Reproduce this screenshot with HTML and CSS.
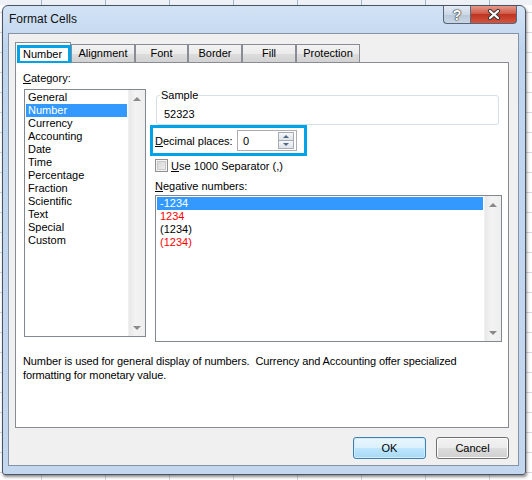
FILE: index.html
```html
<!DOCTYPE html>
<html lang="en">
<head>
  <meta charset="UTF-8" />
  <title>Format Cells</title>
  <link rel="stylesheet" href="styles.css">
</head>
<body>
  <!-- sheet header strip peeking above the dialog -->
  <div class="col-heads"></div>

  <div class="window">
    <div class="titlebar">
      <span class="title">Format Cells</span>
      <div class="caption-btns">
        <span class="cap help">?</span>
        <span class="cap close">
          <svg width="14" height="11" viewBox="0 0 14 11">
            <path d="M3 2 L11 9 M11 2 L3 9" stroke="#3a3a3a" stroke-width="4.2" stroke-linecap="round" fill="none"/>
            <path d="M3 2 L11 9 M11 2 L3 9" stroke="#fff" stroke-width="2.2" stroke-linecap="round" fill="none"/>
          </svg>
        </span>
      </div>
    </div>

    <div class="client">
      <div class="tabs">
        <div class="tab selected"><span class="mark">Number</span></div>
        <div class="tab w-align">Alignment</div>
        <div class="tab w-font">Font</div>
        <div class="tab w-border">Border</div>
        <div class="tab w-fill">Fill</div>
        <div class="tab w-prot">Protection</div>
      </div>

      <div class="panel">
        <div class="panel-top">
          <div class="category">
            <div class="caption"><u>C</u>ategory:</div>
            <div class="listbox cat-list">
              <div class="items">
                <div class="item">General</div>
                <div class="item selected">Number</div>
                <div class="item">Currency</div>
                <div class="item">Accounting</div>
                <div class="item">Date</div>
                <div class="item">Time</div>
                <div class="item">Percentage</div>
                <div class="item">Fraction</div>
                <div class="item">Scientific</div>
                <div class="item">Text</div>
                <div class="item">Special</div>
                <div class="item">Custom</div>
              </div>
              <div class="vscroll">
                <span class="arrow up"></span>
                <span class="arrow down"></span>
              </div>
            </div>
          </div>

          <div class="options">
            <fieldset class="sample">
              <legend>Sample</legend>
              <div class="sample-value">52323</div>
            </fieldset>

            <div class="decimal-row">
              <span class="dec-label"><u>D</u>ecimal places:</span>
              <div class="spinbox">
                <span>0</span>
                <div class="spin">
                  <span class="spin-btn"><span class="tri up"></span></span>
                  <span class="spin-btn"><span class="tri down"></span></span>
                </div>
              </div>
            </div>

            <div class="check-row">
              <span class="checkbox"></span>
              <span><u>U</u>se 1000 Separator (,)</span>
            </div>

            <div class="caption neg-caption"><u>N</u>egative numbers:</div>
            <div class="listbox neg-list">
              <div class="items">
                <div class="item selected">-1234</div>
                <div class="item red">1234</div>
                <div class="item">(1234)</div>
                <div class="item red">(1234)</div>
              </div>
              <div class="vscroll">
                <span class="arrow up"></span>
                <span class="arrow down"></span>
              </div>
            </div>
          </div>
        </div>

        <p class="desc">Number is used for general display of numbers.&nbsp; Currency and Accounting offer specialized<br>formatting for monetary value.</p>
      </div>

      <div class="buttons">
        <button class="btn default">OK</button>
        <button class="btn">Cancel</button>
      </div>
    </div>
  </div>
</body>
</html>
```

FILE: styles.css
```css
:root {
  --ui-font: "Liberation Sans", Arial, sans-serif;
  --frame: #bfd5ee;
  --panel-border: #898c95;
  --select: #3399ff;
  --mark: #00a2e8;
}

* {
  box-sizing: border-box;
}

html, body {
  margin: 0;
  height: 100%;
}

/* spreadsheet behind the dialog */
body {
  font-family: var(--ui-font);
  font-size: 11px;
  color: #000;
  background-color: #fff;
  background-image:
    linear-gradient(90deg, #d4d8de 1px, transparent 1px),
    linear-gradient(#d4d8de 1px, transparent 1px);
  background-size: 64px 20px;
  background-position: 41px 0, 0 12px;
  overflow: hidden;
}

.col-heads {
  height: 5px;
  background-color: #eef1f5;
  background-image: linear-gradient(90deg, #9eb6ce 1px, transparent 1px);
  background-size: 64px 5px;
  background-position: 41px 0;
}

/* Window frame */

.window {
  width: 524px;
  height: 470px;
  margin-left: 2px;
  border: 1px solid #4a5462;
  border-radius: 6px 6px 3px 3px;
  background: linear-gradient(#d3e3f5, var(--frame) 40px, #c3d8ef);
  padding: 0 6px 8px 5px;
  box-shadow: 1px 2px 3px rgba(0, 0, 0, 0.45);
  display: flex;
  flex-direction: column;
}

.titlebar {
  height: 27px;
  display: flex;
  justify-content: space-between;
  align-items: flex-start;
  flex-shrink: 0;
}

.title {
  font-size: 12px;
  line-height: 15px;
  padding-top: 6px;
  padding-left: 1px;
  color: #111;
}

.caption-btns {
  display: flex;
  margin-right: 2px;
}

.cap {
  height: 18px;
  display: flex;
  align-items: center;
  justify-content: center;
  border: 1px solid #56657a;
  border-top: none;
}

.cap.help {
  width: 27px;
  border-radius: 0 0 0 4px;
  border-right: none;
  background: linear-gradient(#e4ecf5, #cbd8e6 50%, #b9c9da 51%, #c9d6e4);
  font: bold 14px var(--ui-font);
  color: #fff;
  text-shadow: 0 0 1px #333, 0 0 1px #333, 0 0 2px #333;
}

.cap.close {
  width: 47px;
  border-radius: 0 0 4px 0;
  background: linear-gradient(#e6998a, #cf5a48 45%, #bf3420 50%, #d4553e);
}

/* Client area */

.client {
  flex: 1;
  background: #f0f0f0;
  border: 1px solid #8593a4;
  padding: 8px 9px 0 6px;
}

.tabs {
  display: flex;
  align-items: flex-end;
  height: 21px;
  margin-bottom: -1px;
  position: relative;
  z-index: 1;
}

.tab {
  height: 18px;
  margin-bottom: 1px;
  border: 1px solid var(--panel-border);
  border-bottom: none;
  background: linear-gradient(#f3f3f3, #ebebeb 50%, #dddddd 51%, #d2d2d2);
  text-align: center;
  line-height: 17px;
}

.tab.selected {
  width: 56px;
  height: 21px;
  margin-bottom: 0;
  background: #fff;
  padding: 2px 0 0 1px;
}

.tab .mark {
  display: block;
  width: 54px;
  height: 18px;
  border: 3px solid var(--mark);
  border-bottom-width: 2px;
  text-align: left;
  padding-left: 3px;
  line-height: 12px;
}

.w-align { width: 64px; }
.w-font { width: 53px; }
.w-border { width: 54px; }
.w-fill { width: 54px; }
.w-prot { width: 64px; }

.panel {
  width: 494px;
  height: 366px;
  background: #fff;
  border: 1px solid var(--panel-border);
  padding: 9px 0 0 8px;
}

.panel-top {
  display: flex;
  align-items: flex-start;
}

.caption {
  line-height: 13px;
  margin-left: -1px;
}

.category {
  width: 122px;
}

/* List boxes */

.listbox {
  display: flex;
  border: 1px solid #828790;
  background: #fff;
}

.cat-list {
  margin-top: 4px;
  height: 248px;
}

.items {
  flex: 1;
  padding: 1px;
}

.item {
  line-height: 13px;
  height: 13px;
  padding-left: 2px;
  white-space: nowrap;
}

.neg-list .item {
  padding-left: 3px;
}

.item.selected {
  background: var(--select);
  color: #fff;
}

.item.red {
  color: #ff0000;
}

.vscroll {
  width: 17px;
  display: flex;
  flex-direction: column;
  justify-content: space-between;
  align-items: center;
  padding: 7px 0 6px;
  background: linear-gradient(90deg, #e8e8e8, #f3f3f3 40%, #eeeeee);
  border-left: 1px solid #f0f0f0;
}

.arrow {
  width: 0;
  height: 0;
  border-left: 4px solid transparent;
  border-right: 4px solid transparent;
}

.arrow.up {
  border-bottom: 4px solid #8a8a8a;
}

.arrow.down {
  border-top: 4px solid #8a8a8a;
}

/* Right side options */

.options {
  width: 347px;
  margin-left: 9px;
  margin-top: 17px;
}

.sample {
  margin: 0 0 0 1px;
  width: 343px;
  padding: 6px 0 3px 7px;
  border: 1px solid #d5dfe5;
  border-radius: 3px;
}

.sample legend {
  line-height: 13px;
  padding: 0 1px;
  margin-left: -4px;
}

.sample-value {
  line-height: 13px;
}

.decimal-row {
  display: flex;
  align-items: center;
  width: 157px;
  height: 31px;
  margin-left: -5px;
  border: 3px solid var(--mark);
  padding-left: 2px;
}

.dec-label {
  width: 82px;
}

.spinbox {
  width: 60px;
  height: 21px;
  display: flex;
  align-items: center;
  justify-content: space-between;
  border: 1px solid #abadb3;
  background: #fff;
  padding: 0 2px 0 5px;
}

.spin {
  display: flex;
  flex-direction: column;
}

.spin-btn {
  width: 16px;
  height: 9px;
  display: flex;
  align-items: center;
  justify-content: center;
  border: 1px solid #a5acb5;
  background: linear-gradient(#f6f7f9, #dfe3e8);
}

.spin-btn + .spin-btn {
  margin-top: -1px;
}

.tri {
  width: 0;
  height: 0;
  border-left: 3px solid transparent;
  border-right: 3px solid transparent;
}

.tri.up {
  border-bottom: 3px solid #4f6788;
}

.tri.down {
  border-top: 3px solid #4f6788;
}

.check-row {
  display: flex;
  align-items: center;
  height: 13px;
  margin-top: 3px;
  gap: 3px;
}

.checkbox {
  width: 13px;
  height: 13px;
  border: 1px solid #8f8f8f;
  background: linear-gradient(135deg, #d2d2d2, #f2f2f2);
  box-shadow: inset 0 0 0 1px #f4f4f4, inset 0 0 0 2px #c9c9c9;
}

.neg-caption {
  margin-top: 8px;
  margin-left: 0;
}

.neg-list {
  margin-top: 2px;
  height: 147px;
}

.desc {
  margin: 12px 0 0 -1px;
  line-height: 14px;
  letter-spacing: -0.1px;
}

/* Dialog buttons */

.buttons {
  display: flex;
  justify-content: flex-end;
  gap: 10px;
  margin-top: 9px;
}

.btn {
  width: 73px;
  height: 22px;
  font: 11px var(--ui-font);
  color: #000;
  border: 1px solid #707070;
  border-radius: 3px;
  background: linear-gradient(#f2f2f2, #ebebeb 50%, #dddddd 51%, #cfcfcf);
  box-shadow: inset 0 0 0 1px #fcfcfc;
  padding: 0;
}

.btn.default {
  border-color: #3c7fb1;
  background: linear-gradient(#eaf6fd, #d9f0fc 50%, #bee6fd 51%, #a7d9f5);
  box-shadow: inset 0 0 0 1px #d1ecfa;
}
```
